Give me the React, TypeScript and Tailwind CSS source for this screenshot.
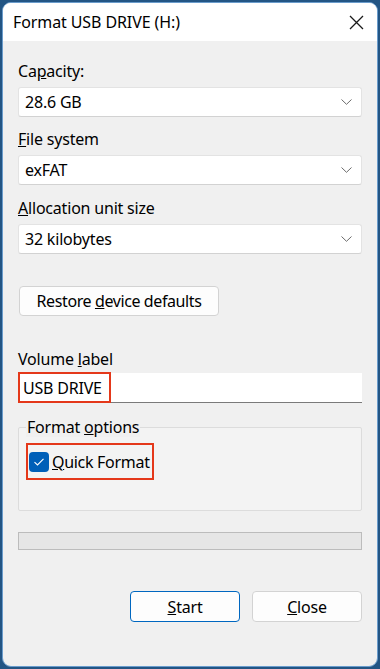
import React from 'react';

const font = { fontFamily: '"Noto Sans", "Open Sans", Arial, sans-serif' };

const Chevron: React.FC = () => (
    <svg width="11" height="6" viewBox="0 0 11 6" className="shrink-0">
        <path d="M0.5 0.5 L5.5 5.3 L10.5 0.5" fill="none" stroke="#6b6b6b" strokeWidth="1" />
    </svg>
);

const Label: React.FC<{ children: React.ReactNode; className?: string }> = ({ children, className }) => (
    <div className={`h-[20px] leading-[20px] text-[16px] tracking-[-0.2px] text-black whitespace-nowrap ${className ?? ''}`}>{children}</div>
);

const Select: React.FC<{ value: string; className?: string }> = ({ value, className }) => (
    <div className={`h-[30px] w-[344px] flex items-center justify-between pl-[6px] pr-[9px] bg-white border border-[#e3e3e3] border-b-[#d2d2d2] rounded-[3px] text-[16px] tracking-[-0.2px] text-black ${className ?? ''}`}>
        <span>{value}</span>
        <Chevron />
    </div>
);

const App: React.FC = () => {
    return (
        <div className="w-[380px] h-[669px] bg-[#235584] p-[2px]" style={font}>
            <div className="w-full h-full rounded-[9px] border border-[#6a9ccc] bg-[#f0f0f0] overflow-hidden flex flex-col">
                {/* title bar */}
                <div className="h-[38px] shrink-0 bg-white flex items-center justify-between pl-[10px] pr-[13px]">
                    <span className="text-[16px] text-black tracking-[-0.1px]">Format USB DRIVE (H:)</span>
                    <svg width="15" height="15" viewBox="0 0 15 15">
                        <path d="M1 1 L14 14 M14 1 L1 14" stroke="#1a1a1a" strokeWidth="1.3" />
                    </svg>
                </div>

                <div className="flex flex-col px-[15px]">
                    <Label className="mt-[20px]">Ca<span className="underline">p</span>acity:</Label>
                    <Select value="28.6 GB" className="mt-[6px]" />

                    <Label className="mt-[12px]"><span className="underline">F</span>ile system</Label>
                    <Select value="exFAT" className="mt-[6px]" />

                    <Label className="mt-[13px]"><span className="underline">A</span>llocation unit size</Label>
                    <Select value="32 kilobytes" className="mt-[6px]" />

                    <button className="mt-[32px] ml-[1px] h-[30px] w-[200px] bg-[#fdfdfd] border border-[#d3d3d3] rounded-[4px] text-[16px] tracking-[-0.4px] text-black whitespace-nowrap">
                        Restore <span className="underline">d</span>evice defaults
                    </button>

                    <Label className="mt-[33px]">Volume <span className="underline">l</span>abel</Label>
                    <div className="mt-[4px] h-[30px] w-[344px] bg-white border-b border-[#7a7a7a] flex items-center">
                        <div className="h-[31px] w-[93px] border-[2.5px] border-[#e4381a] flex items-center pl-[3px] text-[16px] tracking-[-0.2px] text-black whitespace-nowrap">
                            USB DRIVE
                        </div>
                    </div>

                    {/* group box */}
                    <div className="relative mt-[24px] h-[84px] w-[344px] border border-[#dcdcdc] bg-[#f3f3f3] rounded-[2px]">
                        <div className="absolute left-[7px] -top-[11px] px-[1px] bg-[#f0f0f0] h-[20px] leading-[20px] text-[16px] tracking-[-0.2px] text-black whitespace-nowrap">
                            Format <span className="underline">o</span>ptions
                        </div>
                        <div className="mt-[15px] ml-[7px] h-[37px] w-[128px] border-[2.5px] border-[#e4381a] flex items-center gap-[3px] pl-[1px]">
                            <div className="h-[20px] w-[20px] shrink-0 rounded-[4px] bg-[#005fb8] flex items-center justify-center">
                                <svg width="12" height="10" viewBox="0 0 12 10">
                                    <path d="M1.5 5.2 L4.5 8 L10.5 1.8" fill="none" stroke="#ffffff" strokeWidth="1.1" />
                                </svg>
                            </div>
                            <span className="text-[16px] tracking-[-0.3px] text-black whitespace-nowrap"><span className="underline">Q</span>uick Format</span>
                        </div>
                    </div>

                    {/* progress */}
                    <div className="mt-[21px] h-[18px] w-[344px] bg-[#e6e6e6] border border-[#bcbcbc]" />

                    <div className="mt-[41px] flex justify-end gap-[12px]">
                        <button className="h-[31px] w-[110px] bg-[#fdfdfd] border border-[#0067c0] rounded-[4px] text-[16px] tracking-[-0.2px] text-black">
                            <span className="underline">S</span>tart
                        </button>
                        <button className="h-[31px] w-[110px] bg-[#fdfdfd] border border-[#d3d3d3] rounded-[4px] text-[16px] tracking-[-0.2px] text-black">
                            <span className="underline">C</span>lose
                        </button>
                    </div>
                </div>
            </div>
        </div>
    );
};

export default App;
